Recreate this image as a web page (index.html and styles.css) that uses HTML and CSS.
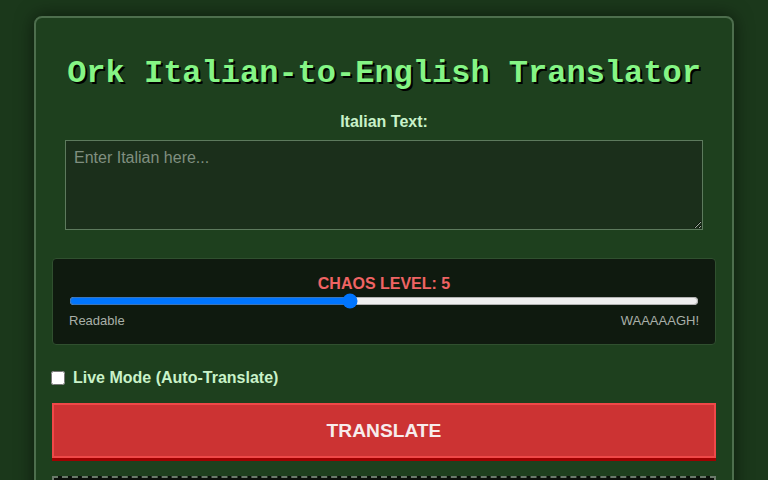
FILE: index.html
```html
<!DOCTYPE html>
<html>
<head>
<meta charset="utf-8">
<link rel="stylesheet" href="styles.css">
</head>
<body>
<div class="app">
  <h1 class="title">Ork Italian-to-English Translator</h1>
  <label class="field-label" for="src">Italian Text:</label>
  <textarea id="src" class="src" placeholder="Enter Italian here..."></textarea>
  <div class="chaos">
    <div class="chaos-label">CHAOS LEVEL: 5</div>
    <input class="chaos-range" type="range" min="1" max="10" value="5">
    <div class="chaos-ends"><span>Readable</span><span>WAAAAAGH!</span></div>
  </div>
  <label class="live"><input type="checkbox" class="live-box"><span>Live Mode (Auto-Translate)</span></label>
  <button class="translate">TRANSLATE</button>
  <div class="output"></div>
</div>
</body>
</html>
```
FILE: styles.css
```css
html, body {
  margin: 0;
  padding: 0;
}
body {
  background: #1b381b;
  font-family: "Liberation Sans", Arial, sans-serif;
  padding: 16px 34px;
}
.app {
  width: 664px;
  background: #1e401e;
  border: 2px solid #4d6e4d;
  border-radius: 8px;
  padding: 16px;
  box-shadow: 0 0 18px rgba(0, 0, 0, 0.55);
}
.title {
  font-family: "Liberation Mono", "Courier New", monospace;
  font-size: 32px;
  line-height: 36px;
  font-weight: bold;
  color: #85f585;
  text-shadow: 2px 2px 0 #000;
  text-align: center;
  margin: 22px 0 21px;
}
.field-label {
  display: block;
  text-align: center;
  font-weight: bold;
  font-size: 16px;
  line-height: 18px;
  color: #c9f2c9;
  margin-bottom: 9px;
}
.src {
  display: block;
  box-sizing: border-box;
  width: 638px;
  height: 90px;
  margin: 0 auto;
  background: #1b2f1b;
  border: 1px solid #5d7a5d;
  color: #d0e8d0;
  font-family: "Liberation Sans", Arial, sans-serif;
  font-size: 16px;
  padding: 8px;
  resize: vertical;
}
.src::placeholder {
  color: #808f80;
}
.chaos {
  margin-top: 28px;
  background: #0f1a0f;
  border: 1px solid #30502f;
  border-radius: 4px;
  padding: 16px 16px 16px;
}
.chaos-label {
  text-align: center;
  color: #ef6464;
  font-weight: bold;
  font-size: 16px;
  line-height: 18px;
}
.chaos-range {
  display: block;
  width: 100%;
  margin: 0;
  height: 16px;
}
.chaos-ends {
  display: flex;
  justify-content: space-between;
  margin-top: 4px;
  font-size: 13px;
  line-height: 15px;
  color: #a9b0a9;
}
.live {
  display: flex;
  align-items: center;
  margin-top: 24px;
  font-weight: bold;
  font-size: 16px;
  line-height: 18px;
  color: #c9f2c9;
}
.live-box {
  width: 14px;
  height: 14px;
  margin: 0 8px 0 -1px;
}
.translate {
  display: block;
  width: 100%;
  margin-top: 16px;
  height: 55px;
  background: #cc3333;
  border: 2px solid #f04848;
  box-shadow: 0 3px 0 #a00000;
  color: #f7ecec;
  font-family: "Liberation Sans", Arial, sans-serif;
  font-weight: bold;
  font-size: 19.2px;
}
.output {
  margin-top: 18px;
  height: 80px;
  background: #0b110b;
  border: 2px dashed #6a7a6a;
}
```
